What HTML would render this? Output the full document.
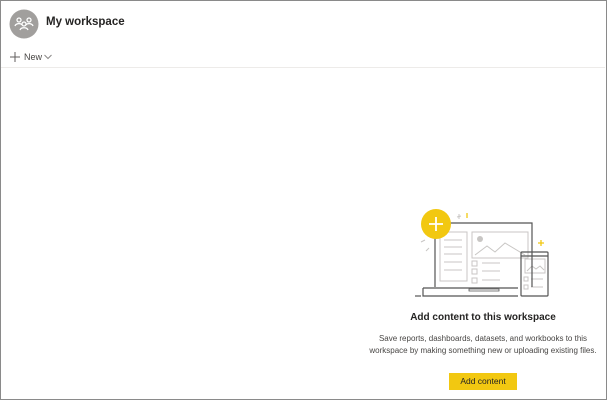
<!DOCTYPE html>
<html><head><style>
body{margin:0;width:607px;height:400px;overflow:hidden;background:#fff;font-family:"Liberation Sans",sans-serif;}
.frame{position:absolute;left:0;top:0;width:605px;height:398px;border:1px solid #8a8a8a;}
.t{position:absolute;white-space:nowrap;color:#252423;}
</style></head><body>
<div class="frame"></div>
<svg style="position:absolute;left:9px;top:9px" width="30" height="30" viewBox="0 0 30 30">
<circle cx="15" cy="15" r="14.5" fill="#a19f9d"/>
<g fill="none" stroke="#fff" stroke-width="1.3">
<circle cx="10" cy="11" r="2"/><circle cx="20" cy="11" r="2"/><circle cx="15" cy="15" r="2"/>
<path d="M6 17c1-3 6-3 7-1M24 17c-1-3-6-3-7-1M11 21c1-3 7-3 8 0"/></g></svg>
<div class="t" style="left:46px;top:16px;font-size:11.5px;font-weight:bold;">My workspace</div>
<svg style="position:absolute;left:10px;top:52px" width="10" height="10"><path d="M5 0v10M0 5h10" stroke="#605e5c" stroke-width="1"/></svg>
<div class="t" style="left:24px;top:52px;font-size:9px;color:#484644">New</div>
<svg style="position:absolute;left:44px;top:54px" width="8" height="6"><path d="M0.5 1l3.5 3.5 3.5-3.5" stroke="#8a8886" fill="none"/></svg>
<div style="position:absolute;left:1px;top:67px;width:604px;height:1px;background:#edebe9"></div>

<svg style="position:absolute;left:400px;top:200px" width="170" height="110" viewBox="0 0 170 110">
<g fill="none" stroke="#c8c6c4" stroke-width="1">
<rect x="40" y="32" width="27" height="49"/><path d="M44 40h18M44 47h18M44 54h18M44 62h18M44 70h18"/>
<rect x="72" y="32" width="56" height="26"/><circle cx="80" cy="39" r="3" fill="#c8c6c4" stroke="none"/>
<path d="M75 55l12-9 8 6 10-9 20 12"/>
<rect x="72" y="61" width="5" height="5"/><rect x="72" y="69" width="5" height="5"/><rect x="72" y="78" width="5" height="5"/>
<path d="M82 63h18M82 71h18M82 80h18"/>
<rect x="125" y="59" width="20" height="14"/><path d="M127 71l5-5 4 3 4-3 4 4"/>
<rect x="124" y="77" width="4" height="4"/><rect x="124" y="85" width="4" height="4"/><path d="M131 79h12M131 87h12"/>
<path d="M21 42l4-2M26 51l3-3M57 17l4-1M59 14v5"/>
</g>
<g fill="none" stroke="#555" stroke-width="1.2">
<path d="M35 87V23h97v64"/>
<path d="M23 88h95M23 88v8h95"/><path d="M69 89h30v2H69z" stroke-width="0.8"/>
<rect x="121" y="52" width="27" height="44" rx="1"/><path d="M121 56h27"/>
<path d="M15 96h6"/>
</g>
<path d="M67 13v5" stroke="#f2c811" stroke-width="1.3"/>
<path d="M141 40v6M138 43h6" stroke="#f2c811" stroke-width="1.3"/>
<circle cx="36" cy="24" r="15" fill="#f2c811"/>
<path d="M36 17v14M29 24h14" stroke="#fff" stroke-width="1.8"/>
</svg>

<div class="t" style="left:365px;width:236px;text-align:center;top:312px;font-size:10px;font-weight:bold;">Add content to this workspace</div>
<div class="t" style="left:355px;width:256px;text-align:center;top:333px;font-size:8px;line-height:12px;color:#484644;">Save reports, dashboards, datasets, and workbooks to this<br>workspace by making something new or uploading existing files.</div>
<div style="position:absolute;left:449px;top:373px;width:68px;height:17px;background:#f2c811;font-size:8.5px;color:#252423;text-align:center;line-height:17px">Add content</div>
</body></html>
